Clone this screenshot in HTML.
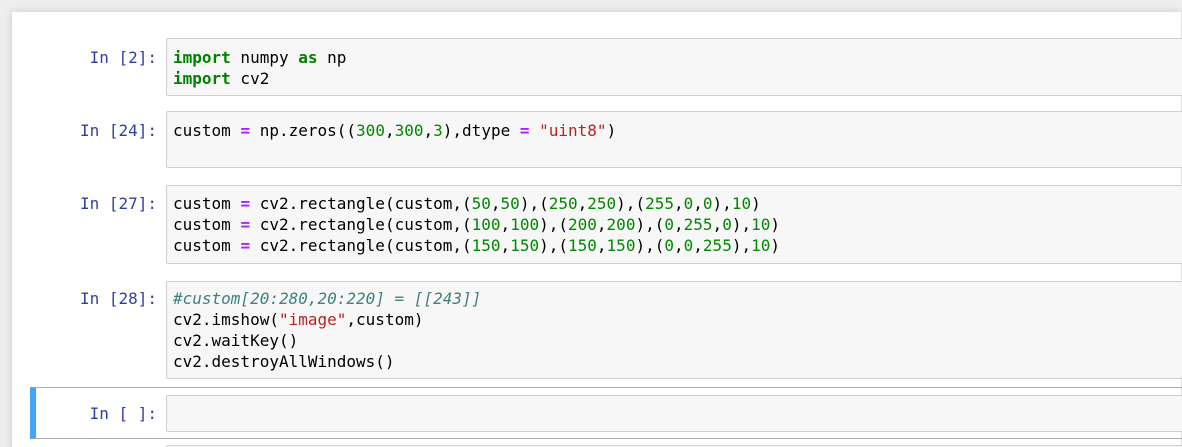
<!DOCTYPE html>
<html><head><meta charset="utf-8"><style>
html,body{margin:0;width:1182px;height:447px;overflow:hidden}
body{background:#eee;position:relative;font-family:"DejaVu Sans Mono","Liberation Mono",monospace;font-size:16px}
#page{position:absolute;left:12px;top:12px;width:1169px;height:440px;background:#fff;box-shadow:0 0 8px rgba(0,0,0,.15)}
.box{position:absolute;left:166px;width:1030px;background:#f7f7f7;border:1px solid #cfcfcf;border-radius:2px;box-sizing:border-box}
.code{position:absolute;left:173px;line-height:21px;white-space:pre;color:#000}
.p{position:absolute;right:1025px;line-height:21px;white-space:pre;color:#303F9F}
.k{color:#008000;font-weight:bold}.o{color:#AA22FF;font-weight:bold}.n{color:#008800}.s{color:#BA2121}.c{color:#408080;font-style:italic}
#sel{position:absolute;left:30px;top:387px;width:1200px;height:52px;border:1px solid #ababab;box-sizing:border-box;border-left:6px solid #42A5F5}
</style></head><body>
<div id="page"></div>
<div class="box" style="top:38px;height:58px"></div>
<div class="p" style="top:47px">In [2]:</div>
<div class="code" style="top:47px"><span class="k">import</span> numpy <span class="k">as</span> np
<span class="k">import</span> cv2</div>

<div class="box" style="top:111px;height:57px"></div>
<div class="p" style="top:120px">In [24]:</div>
<div class="code" style="top:120px">custom <span class="o">=</span> np.zeros((<span class="n">300</span>,<span class="n">300</span>,<span class="n">3</span>),dtype <span class="o">=</span> <span class="s">"uint8"</span>)</div>

<div class="box" style="top:185px;height:79px"></div>
<div class="p" style="top:193px">In [27]:</div>
<div class="code" style="top:193px">custom <span class="o">=</span> cv2.rectangle(custom,(<span class="n">50</span>,<span class="n">50</span>),(<span class="n">250</span>,<span class="n">250</span>),(<span class="n">255</span>,<span class="n">0</span>,<span class="n">0</span>),<span class="n">10</span>)
custom <span class="o">=</span> cv2.rectangle(custom,(<span class="n">100</span>,<span class="n">100</span>),(<span class="n">200</span>,<span class="n">200</span>),(<span class="n">0</span>,<span class="n">255</span>,<span class="n">0</span>),<span class="n">10</span>)
custom <span class="o">=</span> cv2.rectangle(custom,(<span class="n">150</span>,<span class="n">150</span>),(<span class="n">150</span>,<span class="n">150</span>),(<span class="n">0</span>,<span class="n">0</span>,<span class="n">255</span>),<span class="n">10</span>)</div>

<div class="box" style="top:281px;height:98px"></div>
<div class="p" style="top:288px">In [28]:</div>
<div class="code" style="top:288px"><span class="c">#custom[20:280,20:220] = [[243]]</span>
cv2.imshow(<span class="s">"image"</span>,custom)
cv2.waitKey()
cv2.destroyAllWindows()</div>

<div id="sel"></div>
<div class="box" style="top:395px;height:37px"></div>
<div class="p" style="top:403px">In [ ]:</div>
<div class="box" style="top:445px;height:20px"></div>
</body></html>
